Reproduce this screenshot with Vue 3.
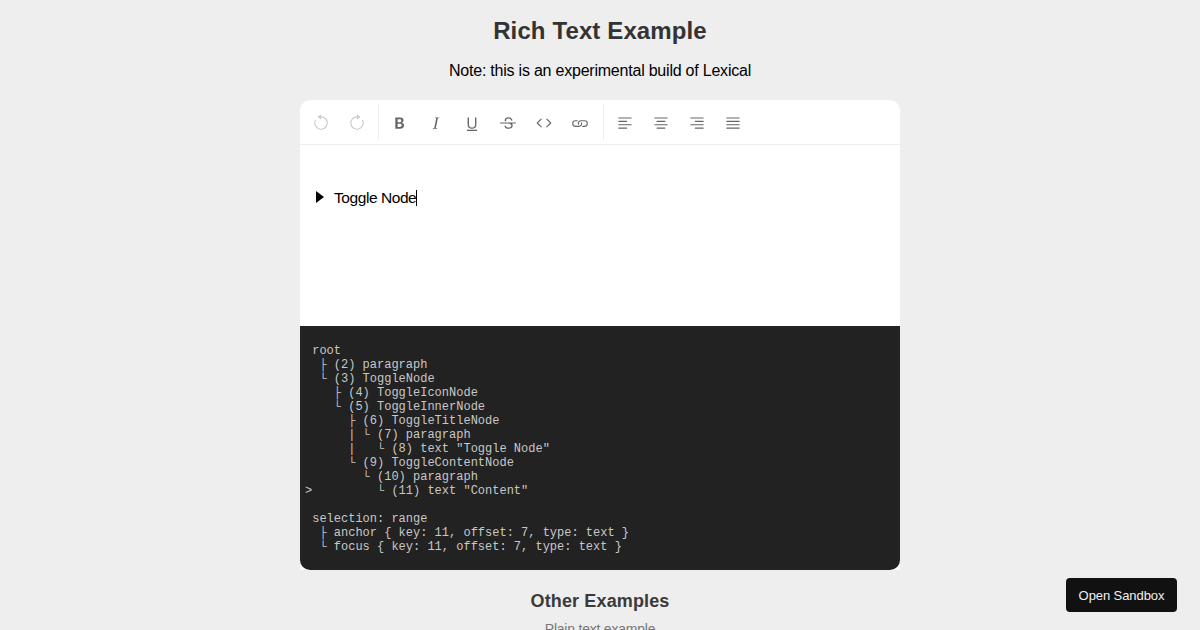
<script setup>
const groupOne = [
  { name: 'bold', d: ['M8.21 13c2.106 0 3.412-1.087 3.412-2.823 0-1.306-.984-2.283-2.324-2.386v-.055a2.176 2.176 0 0 0 1.852-2.14c0-1.51-1.162-2.46-3.014-2.46H3.843V13H8.21zM5.908 4.674h1.696c.963 0 1.517.451 1.517 1.244 0 .834-.629 1.32-1.73 1.32H5.908V4.673zm0 6.788V8.598h1.73c1.217 0 1.88.492 1.88 1.415 0 .943-.643 1.449-1.832 1.449H5.907z'] },
  { name: 'italic', d: ['M7.991 11.674 9.53 4.455c.123-.595.246-.71 1.347-.807l.11-.52H7.211l-.11.52c1.06.096 1.128.212 1.005.807L6.57 11.674c-.123.595-.246.71-1.346.806l-.11.52h3.774l.11-.52c-1.06-.095-1.129-.211-1.006-.806z'] },
  { name: 'underline', d: ['M5.313 3.136h-1.23V9.54c0 2.105 1.47 3.623 3.917 3.623s3.917-1.518 3.917-3.623V3.136h-1.23v6.323c0 1.49-.978 2.57-2.687 2.57-1.709 0-2.687-1.08-2.687-2.57V3.136zM12.5 15h-9v-1h9v1z'] },
  { name: 'strike', d: ['M6.333 5.686c0 .31.083.581.27.814H5.166a2.776 2.776 0 0 1-.099-.76c0-1.627 1.436-2.768 3.48-2.768 1.969 0 3.39 1.175 3.445 2.85h-1.23c-.11-1.08-.964-1.743-2.25-1.743-1.23 0-2.18.602-2.18 1.607zm2.194 7.478c-2.153 0-3.589-1.107-3.705-2.81h1.23c.144 1.06 1.129 1.703 2.544 1.703 1.34 0 2.31-.705 2.31-1.675 0-.827-.547-1.374-1.914-1.675L8.046 8.5H1v-1h14v1h-3.504c.468.437.675.994.675 1.697 0 1.826-1.436 2.967-3.644 2.967z'] },
  { name: 'code', d: ['M5.854 4.854a.5.5 0 1 0-.708-.708l-3.5 3.5a.5.5 0 0 0 0 .708l3.5 3.5a.5.5 0 0 0 .708-.708L2.707 8l3.147-3.146zm4.292 0a.5.5 0 0 1 .708-.708l3.5 3.5a.5.5 0 0 1 0 .708l-3.5 3.5a.5.5 0 0 1-.708-.708L13.293 8l-3.147-3.146z'] },
  { name: 'link', d: ['M6.354 5.5H4a3 3 0 0 0 0 6h3a3 3 0 0 0 2.83-4H9c-.086 0-.17.01-.25.031A2 2 0 0 1 7 10.5H4a2 2 0 1 1 0-4h1.535c.218-.376.495-.714.82-1z', 'M9 5.5a3 3 0 0 0-2.83 4h1.098A2 2 0 0 1 9 6.5h3a2 2 0 1 1 0 4h-1.535a4.02 4.02 0 0 1-.82 1H12a3 3 0 1 0 0-6H9z'] },
]
const history = [
  { name: 'undo', d: ['M8 3a5 5 0 1 1-4.546 2.914.5.5 0 0 0-.908-.417A6 6 0 1 0 8 2v1z', 'M8 4.466V.534a.25.25 0 0 0-.41-.192L5.23 2.308a.25.25 0 0 0 0 .384l2.36 1.966A.25.25 0 0 0 8 4.466z'] },
  { name: 'redo', d: ['M8 3a5 5 0 1 0 4.546 2.914.5.5 0 0 1 .908-.417A6 6 0 1 1 8 2v1z', 'M8 4.466V.534a.25.25 0 0 1 .41-.192l2.36 1.966c.12.1.12.284 0 .384L8.41 4.658A.25.25 0 0 1 8 4.466z'] },
]
const bar = (x, w, y) => `M${x} ${y}h${w}a.5.5 0 0 1 0 1h-${w}a.5.5 0 0 1 0-1z`
const rows = (cells) => [cells.map(([x, w], i) => bar(x, w, 3 + i * 3)).join('')]
const align = [
  { name: 'left', d: rows([[2.5, 11], [2.5, 7], [2.5, 11], [2.5, 7]]) },
  { name: 'center', d: rows([[2.5, 11], [4.5, 7], [2.5, 11], [4.5, 7]]) },
  { name: 'right', d: rows([[2.5, 11], [6.5, 7], [2.5, 11], [6.5, 7]]) },
  { name: 'justify', d: rows([[2.5, 11], [2.5, 11], [2.5, 11], [2.5, 11]]) },
]
const tree = ` root
  ├ (2) paragraph
  └ (3) ToggleNode
    ├ (4) ToggleIconNode
    └ (5) ToggleInnerNode
      ├ (6) ToggleTitleNode
      | └ (7) paragraph
      |   └ (8) text "Toggle Node"
      └ (9) ToggleContentNode
        └ (10) paragraph
>         └ (11) text "Content"

 selection: range
  ├ anchor { key: 11, offset: 7, type: text }
  └ focus { key: 11, offset: 7, type: text }`
</script>

<template>
  <div class="page">
    <h1 class="title">Rich Text Example</h1>
    <p class="note">Note: this is an experimental build of Lexical</p>

    <div class="editor">
      <div class="toolbar">
        <button v-for="b in history" :key="b.name" class="tool disabled" type="button" :aria-label="b.name">
          <svg class="icon" viewBox="0 0 16 16"><path v-for="p in b.d" :key="p" :d="p" /></svg>
        </button>
        <span class="divider first"></span>
        <button v-for="b in groupOne" :key="b.name" class="tool" type="button" :aria-label="b.name">
          <svg class="icon" viewBox="0 0 16 16"><path v-for="p in b.d" :key="p" :d="p" /></svg>
        </button>
        <span class="divider second"></span>
        <button v-for="b in align" :key="b.name" class="tool" type="button" :aria-label="b.name">
          <svg class="icon" viewBox="0 0 16 16"><path v-for="p in b.d" :key="p" :d="p" /></svg>
        </button>
      </div>

      <div class="content">
        <div class="toggle">
          <span class="arrow"></span>
          <span class="toggle-text">Toggle Node</span><span class="caret"></span>
        </div>
      </div>

      <pre class="tree">{{ tree }}</pre>
    </div>

    <h2 class="other">Other Examples</h2>
    <a class="example" href="#">Plain text example</a>

    <button class="sandbox" type="button">Open Sandbox</button>
  </div>
</template>

<style>
html, body { margin: 0; background: #eee; overflow: hidden; }
</style>

<style scoped>
.page {
  height: 630px;
  overflow: hidden;
  display: flex;
  flex-direction: column;
  align-items: center;
  font-family: "Liberation Sans", Arial, sans-serif;
  background: #eee;
  color: #333;
}
.title {
  margin: 17px 0 0;
  font-size: 24px;
  line-height: 28px;
  font-weight: 700;
  letter-spacing: 0.12px;
  color: #333;
}
.note {
  margin: 17px 0 0;
  font-size: 16px;
  line-height: 18px;
  letter-spacing: -0.22px;
  color: #000;
}
.editor {
  margin-top: 20px;
  width: 600px;
  flex: none;
  background: #fff;
  border-radius: 10px 10px 2px 2px;
  display: flex;
  flex-direction: column;
}
.toolbar {
  display: flex;
  height: 36px;
  padding: 4px;
  border-bottom: 1px solid #eee;
  border-radius: 10px 10px 0 0;
}
.tool {
  display: flex;
  box-sizing: border-box;
  width: 34px;
  height: 36px;
  margin: 0 2px 0 0;
  padding: 10px 8px 8px;
  border: 0;
  background: none;
}
.icon {
  display: block;
  width: 18px;
  height: 18px;
  fill: #000;
  fill-rule: evenodd;
  opacity: 0.6;
}
.disabled .icon { opacity: 0.2; }
.divider {
  flex: none;
  width: 1px;
  background: #eee;
}
.divider.first { margin: 0 4px 0 2px; }
.divider.second { margin: 0 4px; }
.content {
  height: 181px;
  padding: 43px 0 0 16px;
  box-sizing: border-box;
}
.toggle {
  display: flex;
  align-items: center;
  height: 18px;
  font-size: 15.5px;
  letter-spacing: -0.43px;
  color: #000;
}
.toggle-text {
  padding-top: 2px;
}
.arrow {
  width: 0;
  height: 0;
  border-style: solid;
  border-width: 6px 0 6px 8px;
  border-color: transparent transparent transparent #000;
  margin-right: 10px;
}
.caret {
  width: 1px;
  height: 16px;
  align-self: flex-end;
  background: #000;
}
.tree {
  margin: 0;
  height: 244px;
  box-sizing: border-box;
  padding: 18px 5px 16px;
  background: #222;
  color: #c8c8c8;
  font-family: "Liberation Mono", monospace;
  font-size: 12px;
  line-height: 14px;
  border-radius: 0 0 10px 10px;
  overflow: hidden;
}
.other {
  margin: 20px 0 0;
  font-size: 18px;
  line-height: 22px;
  font-weight: 700;
  letter-spacing: 0.14px;
  color: #3a3a3a;
}
.example {
  margin-top: 9px;
  font-size: 14px;
  line-height: 16px;
  letter-spacing: -0.22px;
  color: #777;
  text-decoration: none;
}
.sandbox {
  position: fixed;
  right: 23px;
  bottom: 18px;
  width: 111px;
  height: 34px;
  padding: 0;
  border: 0;
  border-radius: 4px;
  background: #111;
  color: #f0f0f0;
  font-family: "Liberation Sans", Arial, sans-serif;
  font-size: 13px;
  letter-spacing: -0.08px;
}
</style>
